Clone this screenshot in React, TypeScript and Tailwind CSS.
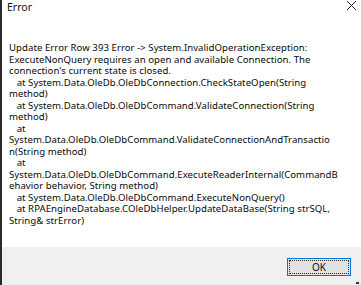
import React from "react";

const lines = [
  "Update Error Row 393 Error -> System.InvalidOperationException:",
  "ExecuteNonQuery requires an open and available Connection. The",
  "connection's current state is closed.",
  "   at System.Data.OleDb.OleDbConnection.CheckStateOpen(String",
  "method)",
  "   at System.Data.OleDb.OleDbCommand.ValidateConnection(String",
  "method)",
  "   at",
  "System.Data.OleDb.OleDbCommand.ValidateConnectionAndTransactio",
  "n(String method)",
  "   at",
  "System.Data.OleDb.OleDbCommand.ExecuteReaderInternal(CommandB",
  "ehavior behavior, String method)",
  "   at System.Data.OleDb.OleDbCommand.ExecuteNonQuery()",
  "   at RPAEngineDatabase.COleDbHelper.UpdateDataBase(String strSQL,",
  "String& strError)",
];

export default function App() {
  return (
    <div
      className="relative w-[361px] h-[285px] flex flex-col bg-white border-l-2 border-[#2a2a2a] overflow-hidden"
      style={{ fontFamily: '"Noto Sans", "Open Sans", sans-serif' }}
    >
      <div className="h-[30px] flex items-start justify-between pl-[5px] pr-[4px]">
        <span className="text-[10.5px] leading-[13px] text-[#111] mt-[1px]">Error</span>
        <svg width="11" height="11" viewBox="0 0 11 11" className="mt-[0px]">
          <path d="M1 1 L10 10 M10 1 L1 10" stroke="#222" strokeWidth="1" fill="none" />
        </svg>
      </div>
      <div className="flex-1 pl-[7px] pt-[12px]">
        {lines.map((l, i) => (
          <div key={i} className="whitespace-pre text-[9.6px] leading-[11.5px] text-[#0a0a0a] tracking-[0.05px]">
            {l}
          </div>
        ))}
      </div>
      <div className="h-[38px] bg-[#f0f0f0] flex items-center justify-end pr-[10px]">
        <div className="w-[64px] h-[18px] border border-[#0078d7] bg-[#e1e1e1] p-[1px] mt-[2px]">
          <div className="w-full h-full border border-dotted border-[#333] flex items-center justify-center">
            <span className="text-[10px] leading-[10px] text-[#111]">OK</span>
          </div>
        </div>
      </div>
      <div className="absolute right-[2px] bottom-[1px] w-[3px] h-[2px] bg-[#333]" />
    </div>
  );
}
